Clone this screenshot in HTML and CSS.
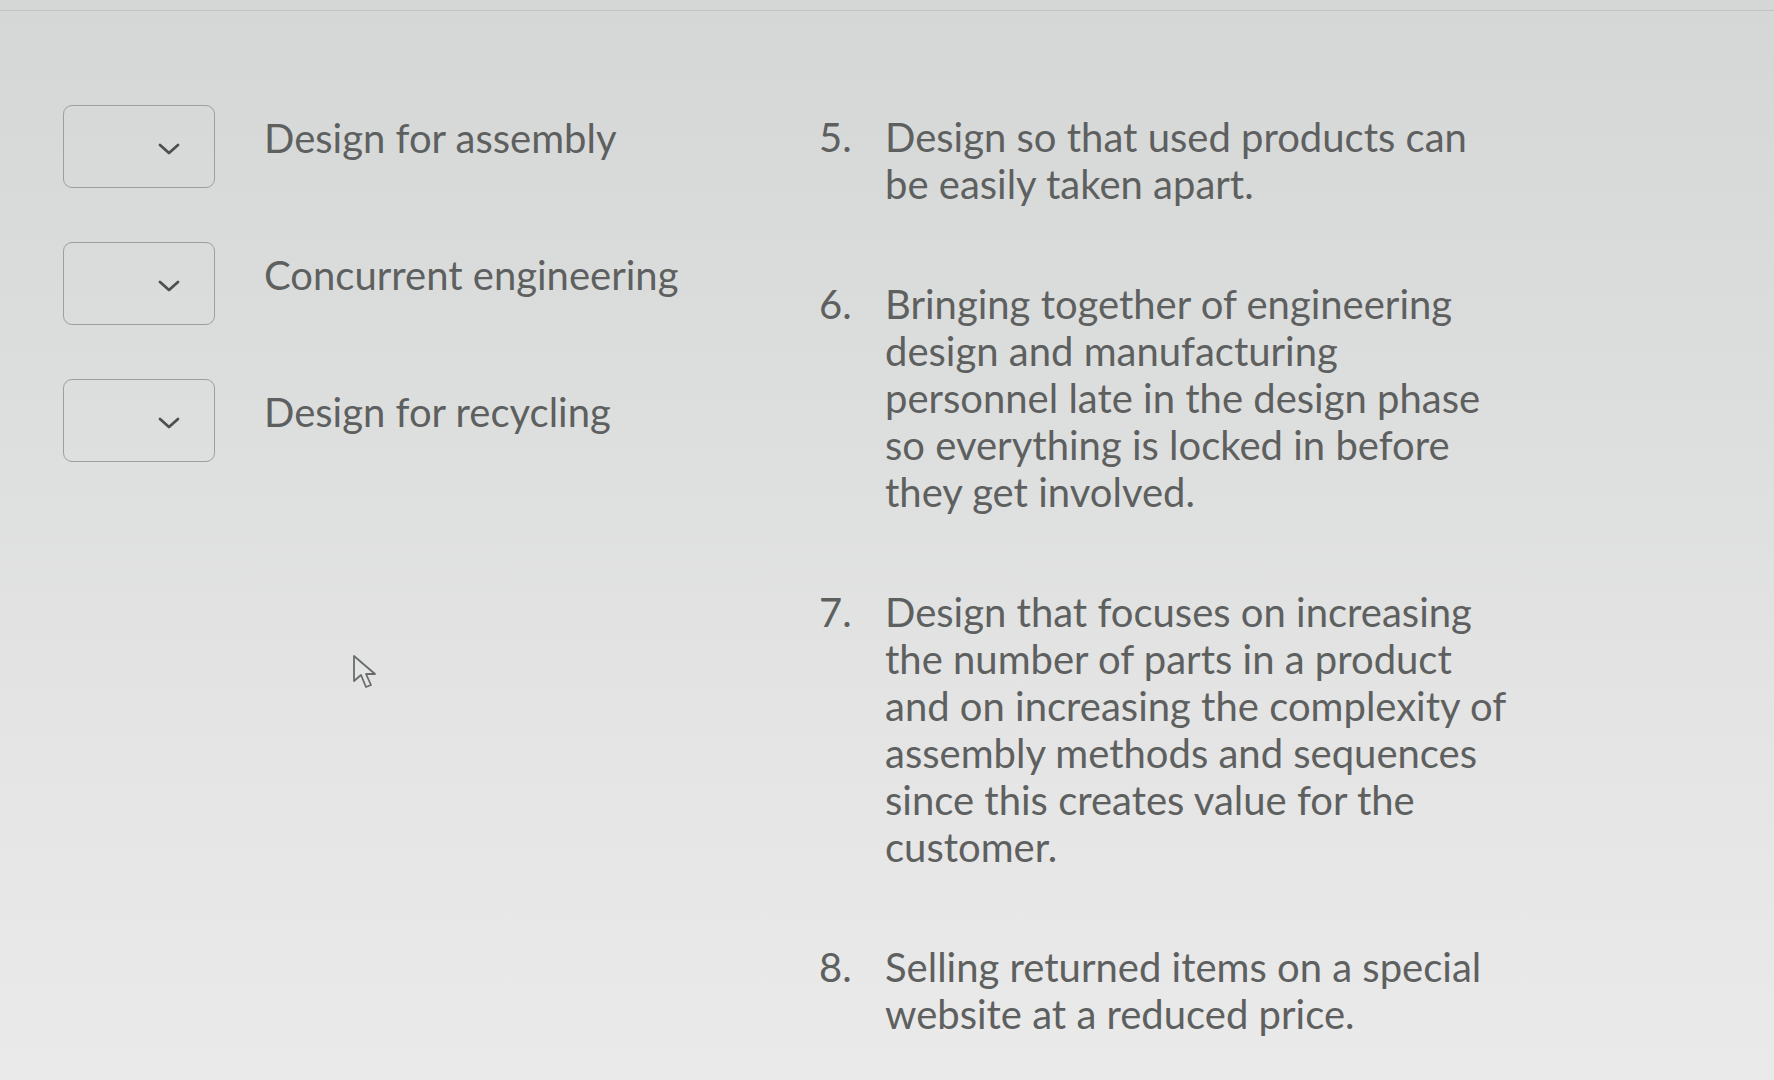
FILE: index.html
```html
<!DOCTYPE html>
<html lang="en">
<head>
<meta charset="utf-8">
<title>Matching</title>
<link rel="stylesheet" href="styles.css">
</head>
<body>
<div class="topline"></div>
<main class="page">
  <section class="choices">
    <div class="choice">
      <div class="select"><svg class="chev" viewBox="0 0 24 14" width="24" height="14"><path d="M3 3 L12 11 L21 3" fill="none" stroke="#4e4f4f" stroke-width="2.8" stroke-linecap="round" stroke-linejoin="round"/></svg></div>
      <div class="label">Design for assembly</div>
    </div>
    <div class="choice">
      <div class="select"><svg class="chev" viewBox="0 0 24 14" width="24" height="14"><path d="M3 3 L12 11 L21 3" fill="none" stroke="#4e4f4f" stroke-width="2.8" stroke-linecap="round" stroke-linejoin="round"/></svg></div>
      <div class="label">Concurrent engineering</div>
    </div>
    <div class="choice">
      <div class="select"><svg class="chev" viewBox="0 0 24 14" width="24" height="14"><path d="M3 3 L12 11 L21 3" fill="none" stroke="#4e4f4f" stroke-width="2.8" stroke-linecap="round" stroke-linejoin="round"/></svg></div>
      <div class="label">Design for recycling</div>
    </div>
  </section>
  <ol class="answers">
    <li class="answer"><span class="num">5.</span><span class="text">Design so that used products can<br>be easily taken apart.</span></li>
    <li class="answer"><span class="num">6.</span><span class="text">Bringing together of engineering<br>design and manufacturing<br>personnel late in the design phase<br>so everything is locked in before<br>they get involved.</span></li>
    <li class="answer"><span class="num">7.</span><span class="text">Design that focuses on increasing<br>the number of parts in a product<br>and on increasing the complexity of<br>assembly methods and sequences<br>since this creates value for the<br>customer.</span></li>
    <li class="answer"><span class="num">8.</span><span class="text">Selling returned items on a special<br>website at a reduced price.</span></li>
  </ol>
</main>
<svg class="cursor" viewBox="0 0 26 36" width="26" height="36"><path d="M2 2 L2 27 L9 21 L14 33 L19 31 L14 20 L23 20 Z" fill="#e4e5e5" stroke="#6a6b6b" stroke-width="1.8" stroke-linejoin="round"/></svg>
</body>
</html>
```
FILE: styles.css
```css
html, body {
  margin: 0;
  padding: 0;
}
body {
  width: 1774px;
  height: 1080px;
  overflow: hidden;
  position: relative;
  font-family: Lato, "Open Sans", sans-serif;
  color: #5e6060;
  background: linear-gradient(180deg, #d5d7d6 0%, #dcdedd 35%, #e4e5e4 70%, #e9eae9 100%);
}
.topline {
  height: 10px;
  border-bottom: 1px solid #c2c3c3;
}
.page {
  display: flex;
  padding: 94px 0 0 63px;
}
.choices {
  width: 756px;
  display: flex;
  flex-direction: column;
  gap: 54px;
}
.choice {
  display: flex;
  align-items: flex-start;
  gap: 49px;
}
.select {
  width: 152px;
  height: 83px;
  box-sizing: border-box;
  border: 1.5px solid #9d9e9e;
  border-radius: 9px;
  display: flex;
  align-items: center;
  justify-content: flex-end;
  padding-right: 33px;
  padding-top: 5px;
}
.label {
  font-size: 40px;
  line-height: 47px;
  padding-top: 10px;
  white-space: nowrap;
}
.answers {
  list-style: none;
  margin: 0;
  padding: 9px 0 0 0;
  display: flex;
  flex-direction: column;
  gap: 73px;
}
.answer {
  display: flex;
  font-size: 40px;
  line-height: 47px;
}
.num {
  width: 66px;
  flex: none;
}
.text {
  white-space: nowrap;
}
.cursor {
  position: absolute;
  left: 352px;
  top: 654px;
}
```
